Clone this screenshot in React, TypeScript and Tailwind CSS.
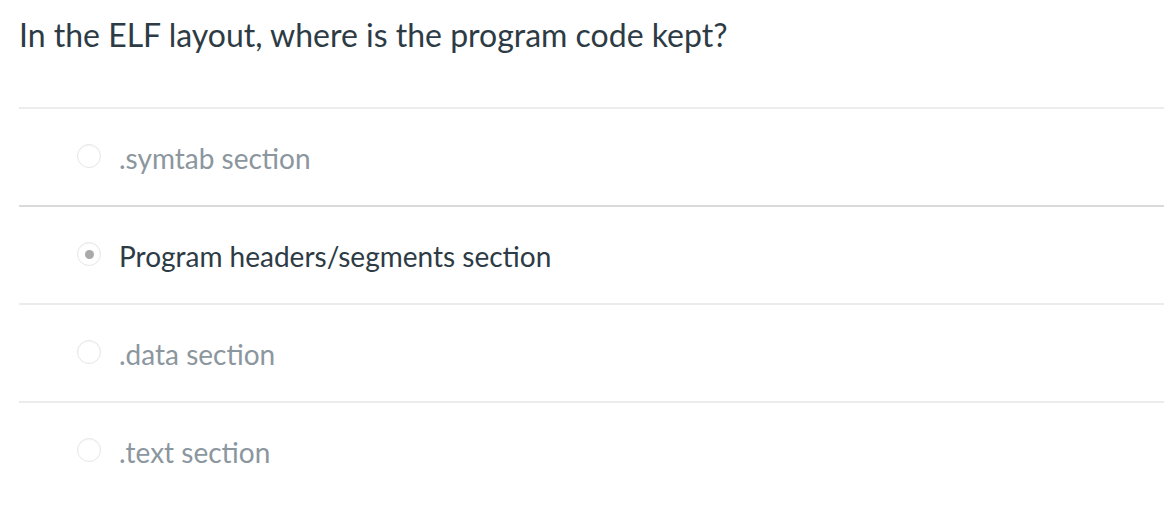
import React from "react";

const options = [
  { label: ".symtab section", selected: false },
  { label: "Program headers/segments section", selected: true },
  { label: ".data section", selected: false },
  { label: ".text section", selected: false },
];

export default function App() {
  return (
    <div className="w-[1164px] h-[524px] bg-white overflow-hidden" style={{ fontFamily: "Lato, 'Noto Sans', sans-serif" }}>
      <div className="pl-[19px] pt-[15px] h-[107px]">
        <h1 className="text-[32px] leading-[40px] text-[#2d3b45] font-normal">In the ELF layout, where is the program code kept?</h1>
      </div>
      <div className="ml-[19px]">
        {options.map((o, i) => (
          <div
            key={i}
            className={`h-[98px] border-t-2 ${i === 1 ? "border-[#dadada]" : "border-[#ececec]"} flex items-center`}
          >
            <div className="ml-[58px] -mt-[2px] w-[24px] h-[24px] rounded-full border border-[#e6e6e6] shadow-[inset_0_1px_2px_rgba(0,0,0,0.04)] flex items-center justify-center">
              {o.selected && <div className="w-[9px] h-[9px] rounded-full bg-[#a9a9a9]" />}
            </div>
            <span className={`ml-[18px] mt-[2px] text-[28px] leading-[34px] ${o.selected ? "text-[#2d3b45]" : "text-[#8b969e]"}`}>{o.label}</span>
          </div>
        ))}
      </div>
    </div>
  );
}
